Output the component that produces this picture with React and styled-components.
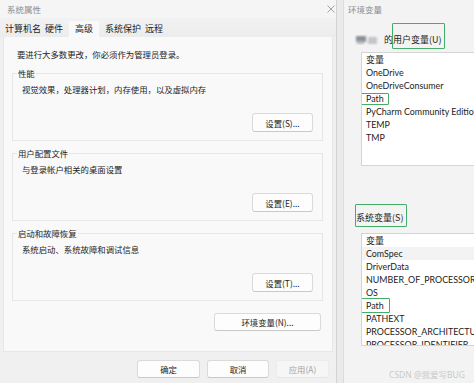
import React from "react";
import styled, { createGlobalStyle } from "styled-components";

const GlobalStyle = createGlobalStyle`
  html, body { margin: 0; padding: 0; }
  body {
    width: 474px;
    height: 383px;
    overflow: hidden;
    background: #e9e9e9;
    font-family: "Noto Sans CJK SC", "Noto Sans", sans-serif;
  }
`;

const Screen = styled.div`
  position: relative;
  display: flex;
  width: 474px;
  height: 383px;
  overflow: hidden;
`;

const LeftWindow = styled.div`
  width: 336px;
  flex-shrink: 0;
  display: flex;
  flex-direction: column;
  background: #f0f0f0;
  border-right: 1px solid #d2d2d2;
`;

const TitleBar = styled.div`
  height: 18px;
  flex-shrink: 0;
  display: flex;
  align-items: center;
  justify-content: space-between;
  padding: 0 ${(p) => p.$right || 0}px 0 ${(p) => p.$left || 7}px;
  background: ${(p) => p.$bg || "#f5f5f5"};
  font-size: 8.5px;
  line-height: 12px;
  color: #8e8e8e;
  box-sizing: border-box;
`;

const CloseIcon = () => (
  <svg width="8" height="8" viewBox="0 0 8 8" style={{ display: "block" }}>
    <path d="M0.5 0.5 L7.5 7.5 M7.5 0.5 L0.5 7.5" stroke="#9a9a9a" strokeWidth="0.9" fill="none" />
  </svg>
);

const TabBar = styled.div`
  height: 19px;
  flex-shrink: 0;
  display: flex;
  align-items: flex-end;
  padding-left: 3px;
  background: linear-gradient(#f2f2f2, #ececec);
`;

const Tab = styled.div`
  height: 16px;
  display: flex;
  align-items: center;
  padding: 0 ${(p) => (p.$active ? 6 : 2)}px;
  margin: 0 ${(p) => (p.$active ? 4 : 0)}px;
  background: ${(p) => (p.$active ? "#f9f9f9" : "transparent")};
  font-size: 9px;
  line-height: 12px;
  color: #1c1c1c;
`;

const Panel = styled.div`
  flex: 1;
  margin: 0 3px;
  background: #f9f9f9;
  border: 1px solid #e7e7e7;
  border-top: none;
  padding: 11px 9px 0 8px;
  display: flex;
  flex-direction: column;
`;

const Notice = styled.div`
  font-size: 8.4px;
  line-height: 12px;
  color: #1c1c1c;
  padding-left: 5px;
`;

const Group = styled.fieldset`
  margin: ${(p) => p.$top}px 0 0 0;
  padding: 4px 9px 8px 4px;
  border: 1px solid #e6e6e6;
  min-width: 0;
`;

const Legend = styled.legend`
  padding: 0 1px;
  font-size: 8.4px;
  line-height: 12px;
  color: #1c1c1c;
`;

const Desc = styled.div`
  margin-left: 5px;
  font-size: 8.4px;
  line-height: 12px;
  color: #1c1c1c;
`;

const ButtonRow = styled.div`
  display: flex;
  justify-content: flex-end;
  margin-top: ${(p) => p.$top || 0}px;
  padding-right: ${(p) => p.$right || 0}px;
`;

const Button = styled.div`
  width: ${(p) => p.$w}px;
  height: ${(p) => p.$h || 19}px;
  box-sizing: border-box;
  display: flex;
  align-items: center;
  justify-content: center;
  background: ${(p) => (p.$disabled ? "#f6f6f6" : "#fdfdfd")};
  border: 1px solid ${(p) => (p.$disabled ? "#ececec" : "#dadada")};
  border-bottom-color: ${(p) => (p.$disabled ? "#e6e6e6" : "#c9c9c9")};
  border-radius: 3px;
  font-size: 8.4px;
  line-height: 12px;
  color: ${(p) => (p.$disabled ? "#a5a5a5" : "#1c1c1c")};
`;

const Footer = styled.div`
  height: 31px;
  flex-shrink: 0;
  display: flex;
  justify-content: flex-end;
  align-items: flex-start;
  gap: 7px;
  padding: 8px 7px 0 0;
  box-sizing: border-box;
  background: #f0f0f0;
`;

const Gap = styled.div`
  width: 6px;
  flex-shrink: 0;
  background: #eaeaea;
`;

const RightWindow = styled.div`
  flex: 1;
  min-width: 0;
  display: flex;
  flex-direction: column;
  background: #f3f3f3;
  border-left: 1px solid #dcdcdc;
  overflow: hidden;
`;

const SectionLabel = styled.div`
  display: flex;
  align-items: center;
  gap: 5px;
  margin-top: ${(p) => p.$top}px;
  padding-left: ${(p) => p.$left}px;
  height: 12px;
  font-size: 9px;
  line-height: 12px;
  color: #1c1c1c;
  white-space: nowrap;
`;

const Mark = styled.span`
  position: relative;
  &::after {
    content: "";
    position: absolute;
    left: ${(p) => p.$l}px;
    right: ${(p) => p.$r}px;
    top: ${(p) => p.$t}px;
    bottom: ${(p) => p.$b}px;
    border: 1.5px solid #45ad68;
    border-radius: 1px;
  }
`;

const ListBox = styled.div`
  margin-top: ${(p) => p.$top}px;
  margin-left: 17px;
  width: 140px;
  height: ${(p) => p.$h}px;
  box-sizing: border-box;
  flex-shrink: 0;
  background: #ffffff;
  border: 1px solid #d4d4d4;
  overflow: hidden;
`;

const Row = styled.div`
  height: 13px;
  padding-left: 4px;
  font-family: Lato, "Noto Sans", "Noto Sans CJK SC", sans-serif;
  font-size: 8.9px;
  line-height: 13px;
  color: #1c1c1c;
  white-space: nowrap;
  background: ${(p) => (p.$shade ? "#f3f3f3" : "transparent")};
  ${(p) => (p.$head ? "font-family: 'Noto Sans CJK SC', sans-serif; font-size: 9px;" : "")}
`;

const Watermark = styled.div`
  position: absolute;
  right: 9px;
  bottom: 3px;
  font-family: "Noto Sans", "Noto Sans CJK SC", sans-serif;
  font-size: 8.5px;
  line-height: 11px;
  color: #c9c9c9;
`;

const UserIcon = () => (
  <svg width="24" height="10" viewBox="0 0 24 10" style={{ display: "block" }}>
    <defs>
      <filter id="bl" x="-20%" y="-40%" width="140%" height="180%">
        <feGaussianBlur stdDeviation="0.9" />
      </filter>
    </defs>
    <g filter="url(#bl)">
      <rect x="1" y="1" width="10" height="6" fill="#8a8f96" />
      <rect x="2" y="6" width="7" height="3" fill="#b5b8bd" />
      <rect x="13" y="2" width="9" height="7" fill="#c3c5c8" />
    </g>
  </svg>
);

export default function App() {
  const userVars = ["OneDrive", "OneDriveConsumer", "Path", "PyCharm Community Edition", "TEMP", "TMP"];
  const sysVars = [
    "ComSpec",
    "DriverData",
    "NUMBER_OF_PROCESSORS",
    "OS",
    "Path",
    "PATHEXT",
    "PROCESSOR_ARCHITECTURE",
    "PROCESSOR_IDENTIFIER",
  ];
  return (
    <Screen>
      <GlobalStyle />
      <LeftWindow>
        <TitleBar $right={1}>
          <span>系统属性</span>
          <CloseIcon />
        </TitleBar>
        <TabBar>
          <Tab>计算机名</Tab>
          <Tab>硬件</Tab>
          <Tab $active>高级</Tab>
          <Tab>系统保护</Tab>
          <Tab>远程</Tab>
        </TabBar>
        <Panel>
          <Notice>要进行大多数更改，你必须作为管理员登录。</Notice>
          <Group $top={7}>
            <Legend>性能</Legend>
            <Desc>视觉效果，处理器计划，内存使用，以及虚拟内存</Desc>
            <ButtonRow $top={18}>
              <Button $w={61}>设置(S)...</Button>
            </ButtonRow>
          </Group>
          <Group $top={6}>
            <Legend>用户配置文件</Legend>
            <Desc>与登录帐户相关的桌面设置</Desc>
            <ButtonRow $top={18}>
              <Button $w={61}>设置(E)...</Button>
            </ButtonRow>
          </Group>
          <Group $top={6}>
            <Legend>启动和故障恢复</Legend>
            <Desc>系统启动、系统故障和调试信息</Desc>
            <ButtonRow $top={18}>
              <Button $w={61}>设置(T)...</Button>
            </ButtonRow>
          </Group>
          <ButtonRow $top={12} $right={2}>
            <Button $w={107} $h={18}>环境变量(N)...</Button>
          </ButtonRow>
        </Panel>
        <Footer>
          <Button $w={63} $h={18}>确定</Button>
          <Button $w={62} $h={18}>取消</Button>
          <Button $w={53} $h={18} $disabled>应用(A)</Button>
        </Footer>
      </LeftWindow>
      <Gap />
      <RightWindow>
        <TitleBar $bg="#f3f3f3" $left={4}>
          <span>环境变量</span>
        </TitleBar>
        <SectionLabel $top={16} $left={11}>
          <UserIcon />
          <span>
            的
            <Mark $l={-1} $r={-3} $t={-10} $b={-3}>用户变量(U)</Mark>
          </span>
        </SectionLabel>
        <ListBox $top={6} $h={114}>
          <Row $head>变量</Row>
          {userVars.map((v) => (
            <Row key={v}>
              {v === "Path" ? (
                <Mark $l={-9} $r={-5} $t={0} $b={-1}>{v}</Mark>
              ) : (
                v
              )}
            </Row>
          ))}
        </ListBox>
        <SectionLabel $top={46} $left={12}>
          <Mark $l={-1} $r={-4} $t={-8} $b={-3}>系统变量(S)</Mark>
        </SectionLabel>
        <ListBox $top={9} $h={113}>
          <Row $head>变量</Row>
          {sysVars.map((v) => (
            <Row key={v} $shade={v === "ComSpec"}>
              {v === "Path" ? (
                <Mark $l={-10} $r={-6} $t={-2} $b={-2}>{v}</Mark>
              ) : (
                v
              )}
            </Row>
          ))}
        </ListBox>
      </RightWindow>
      <Watermark>CSDN @我爱写BUG</Watermark>
    </Screen>
  );
}
